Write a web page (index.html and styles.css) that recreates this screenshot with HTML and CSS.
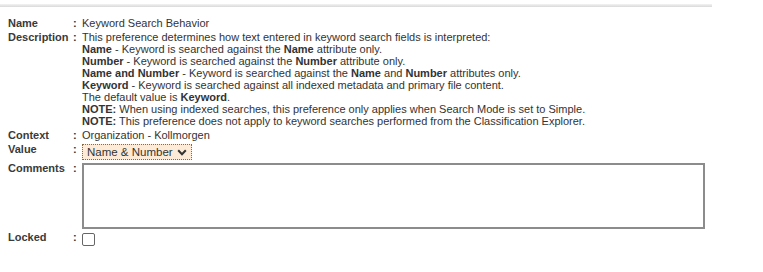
FILE: index.html
```html
<!DOCTYPE html>
<html lang="en">
<head>
  <meta charset="UTF-8" />
  <title>Preference Details</title>
  <link rel="stylesheet" href="styles.css">
</head>
<body>
  <div class="top-rule"></div>

  <!-- Preference details -->
  <div class="pref">
    <div class="label">Name</div><div class="colon">:</div>
    <div class="value">Keyword Search Behavior</div>

    <div class="label">Description</div><div class="colon">:</div>
    <div class="value desc">
      This preference determines how text entered in keyword search fields is interpreted:<br>
      <b>Name</b> - Keyword is searched against the <b>Name</b> attribute only.<br>
      <b>Number</b> - Keyword is searched against the <b>Number</b> attribute only.<br>
      <b>Name and Number</b> - Keyword is searched against the <b>Name</b> and <b>Number</b> attributes only.<br>
      <b>Keyword</b> - Keyword is searched against all indexed metadata and primary file content.<br>
      The default value is <b>Keyword</b>.<br>
      <b>NOTE:</b> When using indexed searches, this preference only applies when Search Mode is set to Simple.<br>
      <b>NOTE:</b> This preference does not apply to keyword searches performed from the Classification Explorer.
    </div>

    <div class="label">Context</div><div class="colon">:</div>
    <div class="value">Organization - Kollmorgen</div>

    <div class="label">Value</div><div class="colon">:</div>
    <div class="value">
      <div class="select">Name &amp; Number
        <svg width="10" height="7" viewBox="0 0 10 7"><path d="M1.2 1.3 L5 5.2 L8.8 1.3" fill="none" stroke="#333" stroke-width="2"/></svg>
      </div>
    </div>

    <div class="label">Comments</div><div class="colon">:</div>
    <div class="value"><textarea class="comments"></textarea></div>

    <div class="label">Locked</div><div class="colon">:</div>
    <div class="value"><span class="checkbox"></span></div>
  </div>
</body>
</html>
```
FILE: styles.css
```css
body {
  margin: 0;
  padding: 0;
  font-family: "Liberation Sans", Arial, sans-serif;
  font-size: 11px;
  color: #333;
  background: #fff;
}
.top-rule {
  width: 712px;
  height: 3px;
  margin-top: 4px;
  background: linear-gradient(#f3f3f3, #d9d9d9);
}
.pref {
  display: grid;
  grid-template-columns: 65px 9px 1fr;
  padding: 10px 0 0 8px;
  line-height: 12px;
}
.label {
  font-weight: bold;
  color: #3a3a3a;
  padding-bottom: 2px;
}
.colon {
  font-weight: bold;
}
.value {
  padding-bottom: 2px;
}
.select {
  display: inline-flex;
  align-items: center;
  gap: 4px;
  height: 14px;
  padding: 0 4px;
  margin-top: 1px;
  border: 1px dotted #8a6a40;
  background: #fdebd8;
  font-size: 11.5px;
  color: #333;
}
.comments {
  display: block;
  width: 619px;
  height: 62px;
  margin: 1px 0 0 0;
  padding: 0;
  border: 2px solid #8c8c8c;
  resize: none;
}
.checkbox {
  display: block;
  width: 11px;
  height: 11px;
  margin-top: 2px;
  border: 1px solid #666;
  border-radius: 2px;
}
```
